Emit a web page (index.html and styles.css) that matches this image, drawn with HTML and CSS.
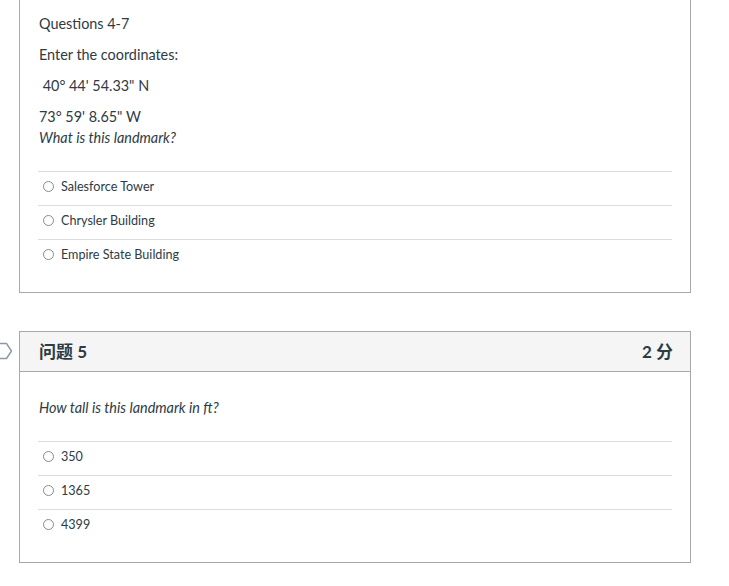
FILE: index.html
```html
<!DOCTYPE html>
<html lang="zh">
<head>
<meta charset="utf-8">
<title>Quiz</title>
<link rel="stylesheet" href="styles.css">
</head>
<body>
<div class="quiz">
  <section class="question question-first">
    <div class="question-text">
      <p>Questions 4-7</p>
      <p>Enter the coordinates:</p>
      <p>&nbsp;40° 44' 54.33" N</p>
      <p class="last">73° 59' 8.65" W<br><em>What is this landmark?</em></p>
    </div>
    <div class="answers">
      <label class="answer"><span class="radio"></span><span>Salesforce Tower</span></label>
      <label class="answer"><span class="radio"></span><span>Chrysler Building</span></label>
      <label class="answer"><span class="radio"></span><span>Empire State Building</span></label>
    </div>
  </section>

  <section class="question">
    <svg class="flag" width="14" height="20" viewBox="0 0 14 20" aria-hidden="true">
      <path d="M0 2.5 H7.5 L12.5 10 L7.5 17.5 H0" fill="none" stroke="#8d9aa6" stroke-width="1.4" stroke-linejoin="round"/>
    </svg>
    <header class="question-header">
      <span class="q-name">问题 5</span>
      <span class="q-points">2 分</span>
    </header>
    <div class="question-text padded">
      <p class="last"><em>How tall is this landmark in ft?</em></p>
    </div>
    <div class="answers">
      <label class="answer"><span class="radio"></span><span>350</span></label>
      <label class="answer"><span class="radio"></span><span>1365</span></label>
      <label class="answer"><span class="radio"></span><span>4399</span></label>
    </div>
  </section>
</div>
</body>
</html>
```

FILE: styles.css
```css
html, body {
  margin: 0;
  padding: 0;
  background: #ffffff;
}

body {
  font-family: Lato, "Noto Sans CJK SC", sans-serif;
  color: #2d3b45;
  font-size: 14.4px;
  line-height: 21px;
}

.quiz {
  display: flex;
  flex-direction: column;
  gap: 38px;
  width: 672px;
  margin-left: 19px;
}

.question {
  position: relative;
  border: 1px solid #a8a8a8;
  padding-bottom: 19px;
}

.question-first {
  border-top: none;
}

.question-text {
  padding: 13px 18px 0 19px;
}

.question-text.padded {
  padding-top: 25px;
}

.question-text p {
  margin: 0 0 10px 0;
}

.question-text p.last {
  margin-bottom: 0;
}

.answers {
  margin: 23px 18px 0 18px;
}

.answer {
  display: flex;
  align-items: center;
  gap: 7px;
  border-top: 1px solid #dcdcdc;
  padding: 5px 0 9px 5px;
  font-size: 12.6px;
  line-height: 19px;
}

.radio {
  width: 9px;
  height: 9px;
  border: 1px solid #8a8a8a;
  border-radius: 50%;
  background: #fff;
  flex: none;
}

.question-header {
  display: flex;
  justify-content: space-between;
  align-items: center;
  height: 39px;
  background: #f5f5f5;
  border-bottom: 1px solid #a8a8a8;
  padding: 0 17px 0 19px;
  font-weight: 700;
  font-size: 17px;
}

.q-points {
  font-size: 17px;
}

.flag {
  position: absolute;
  left: -21px;
  top: 9px;
}
```
